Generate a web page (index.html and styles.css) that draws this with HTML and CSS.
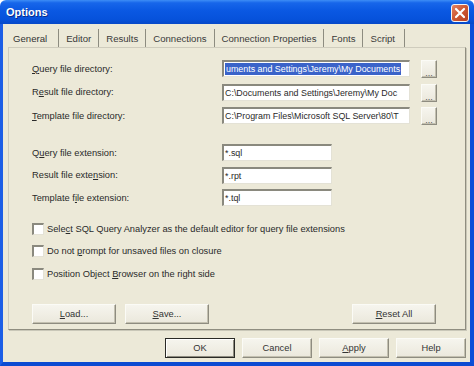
FILE: index.html
```html
<!DOCTYPE html>
<html>
<head>
<meta charset="utf-8">
<link rel="stylesheet" href="styles.css">
</head>
<body>
<div class="window">
  <div class="titlebar">
    <span class="title">Options</span>
    <div class="close">
      <svg width="12" height="12" viewBox="0 0 12 12"><path d="M2 2 L10 10 M10 2 L2 10" stroke="#fff" stroke-width="2.2" stroke-linecap="round"/></svg>
    </div>
  </div>
  <div class="frame">
    <div class="tabs">
      <div class="tab active">General</div>
      <div class="tab">Editor</div>
      <div class="tab">Results</div>
      <div class="tab">Connections</div>
      <div class="tab">Connection Properties</div>
      <div class="tab">Fonts</div>
      <div class="tab last">Script</div>
    </div>
    <div class="panel">
      <div class="group dirs">
        <div class="row">
          <span class="lbl"><u>Q</u>uery file directory:</span>
          <div class="field wide"><span class="hl">uments and Settings\Jeremy\My Documents</span></div>
          <button class="btn dots">...</button>
        </div>
        <div class="row">
          <span class="lbl">R<u>e</u>sult file directory:</span>
          <div class="field wide">C:\Documents and Settings\Jeremy\My Doc</div>
          <button class="btn dots">...</button>
        </div>
        <div class="row">
          <span class="lbl"><u>T</u>emplate file directory:</span>
          <div class="field wide">C:\Program Files\Microsoft SQL Server\80\T</div>
          <button class="btn dots">...</button>
        </div>
      </div>
      <div class="group exts">
        <div class="row">
          <span class="lbl">Q<u>u</u>ery file extension:</span>
          <div class="field short">*.sql</div>
        </div>
        <div class="row">
          <span class="lbl">Result file exte<u>n</u>sion:</span>
          <div class="field short">*.rpt</div>
        </div>
        <div class="row">
          <span class="lbl">Template f<u>i</u>le extension:</span>
          <div class="field short">*.tql</div>
        </div>
      </div>
      <div class="group checks">
        <div class="check"><span class="box"></span><span>Sele<u>c</u>t SQL Query Analyzer as the default editor for query file extensions</span></div>
        <div class="check"><span class="box"></span><span>Do not <u>p</u>rompt for unsaved files on closure</span></div>
        <div class="check"><span class="box"></span><span>Position Object <u>B</u>rowser on the right side</span></div>
      </div>
      <div class="panel-buttons">
        <button class="btn big"><u>L</u>oad...</button>
        <button class="btn big"><u>S</u>ave...</button>
        <span class="spacer"></span>
        <button class="btn big"><u>R</u>eset All</button>
      </div>
    </div>
    <div class="dialog-buttons">
      <button class="btn dlg default">OK</button>
      <button class="btn dlg">Cancel</button>
      <button class="btn dlg"><u>A</u>pply</button>
      <button class="btn dlg">Help</button>
    </div>
  </div>
</div>
</body>
</html>
```
FILE: styles.css
```css
html, body {
  margin: 0;
  padding: 0;
  background: #fff;
}

.window {
  width: 474px;
  height: 366px;
  display: flex;
  flex-direction: column;
  font-family: "Liberation Sans", Arial, sans-serif;
  font-size: 9.3px;
  color: #2a2a2a;
  overflow: hidden;
}

.titlebar {
  height: 24px;
  flex: none;
  display: flex;
  align-items: center;
  justify-content: space-between;
  padding: 0 5px 0 6px;
  background: linear-gradient(#3d8df6 0%, #1766ea 12%, #0a58e2 45%, #0652db 80%, #0749c8 100%);
  border-radius: 6px 6px 0 0;
}

.title {
  color: #fff;
  font-weight: bold;
  font-size: 11px;
  text-shadow: 1px 1px 0 #0a2d8a;
}

.close {
  width: 18px;
  height: 18px;
  box-sizing: border-box;
  border: 1px solid #f4f4f4;
  border-radius: 3px;
  background: linear-gradient(135deg, #e48466 0%, #cf5a35 45%, #b84020 100%);
  display: flex;
  align-items: center;
  justify-content: center;
  margin-top: 2px;
}

.frame {
  flex: 1;
  display: flex;
  flex-direction: column;
  background: #ece9d8;
  border-left: 3px solid #1c5ee6;
  border-right: 4px solid #0a4ed8;
  border-bottom: 4px solid #0b4bd2;
  padding: 5px 4px 4px 5px;
}

.tabs {
  height: 18px;
  flex: none;
  display: flex;
  align-items: stretch;
  font-size: 9.6px;
}

.tab {
  display: flex;
  align-items: center;
  padding: 1px 7px 0 7px;
  border-left: 1px solid #8d8c80;
  color: #3a3a3a;
  white-space: nowrap;
}

.tab.active {
  border-left: none;
  padding: 1px 11px 0 5px;
  color: #333;
}

.tab.last {
  border-right: 1px solid #8d8c80;
  padding-right: 9px;
}

.panel {
  height: 283px;
  flex: none;
  box-sizing: border-box;
  border: 1px solid #cfccbd;
  border-right-color: #8f8d80;
  border-bottom-color: #8f8d80;
  box-shadow: 1px 1px 0 #c9c7b8;
  padding: 12px 0 0 23px;
  display: flex;
  flex-direction: column;
}

.group {
  display: flex;
  flex-direction: column;
}

.dirs { gap: 6.5px; }
.exts { gap: 5.5px; margin-top: 20px; }
.checks { gap: 9.5px; margin-top: 16px; }

.row {
  display: flex;
  align-items: center;
  height: 17px;
}

.lbl {
  width: 190px;
  flex: none;
  white-space: nowrap;
}

.field {
  height: 17px;
  box-sizing: border-box;
  background: #fff;
  border-top: 2px solid #8a897e;
  border-left: 2px solid #8a897e;
  border-right: 1px solid #e4e2d6;
  border-bottom: 1px solid #e4e2d6;
  padding: 0 1px;
  display: flex;
  align-items: center;
  white-space: nowrap;
  overflow: hidden;
  color: #2a2a2a;
  font-size: 8.9px;
}

.wide { width: 188px; }
.short { width: 110px; }

.hl {
  background: #3a63c9;
  color: #fff;
  padding: 1px 1px;
}

.btn {
  font-family: "Liberation Sans", Arial, sans-serif;
  font-size: 9.3px;
  color: #333;
  background: linear-gradient(#f6f5ee, #ebe8dc);
  border: 1px solid;
  border-color: #fbfbf6 #8e8c80 #8e8c80 #fbfbf6;
  box-shadow: inset -1px -1px 0 #c3c0b0;
  padding: 0;
  margin: 0;
  box-sizing: border-box;
}

.dots {
  width: 16px;
  height: 18px;
  margin-left: 11px;
  margin-top: 1px;
  line-height: 18px;
  padding-top: 3px;
  font-size: 9px;
  color: #555;
}

.check {
  display: flex;
  align-items: center;
  height: 13px;
  white-space: nowrap;
}

.box {
  width: 12px;
  height: 12px;
  box-sizing: border-box;
  background: #fff;
  border-top: 2px solid #8a897e;
  border-left: 2px solid #8a897e;
  border-right: 1px solid #e4e2d6;
  border-bottom: 1px solid #e4e2d6;
  margin-right: 3px;
  flex: none;
}

.panel-buttons {
  display: flex;
  margin-top: 24px;
  padding-right: 29px;
}

.big {
  width: 84px;
  height: 20px;
  margin-right: 9px;
}

.big:last-child { margin-right: 0; }

.spacer { flex: 1; }

.dialog-buttons {
  display: flex;
  justify-content: flex-end;
  gap: 7px;
  margin-top: 8px;
  height: 20px;
}

.dlg {
  width: 70px;
  height: 20px;
}

.default {
  border: 1px solid #2a2a26;
  box-shadow: inset 1px 1px 0 #fff, inset -1px -1px 0 #8e8c80;
}
```
